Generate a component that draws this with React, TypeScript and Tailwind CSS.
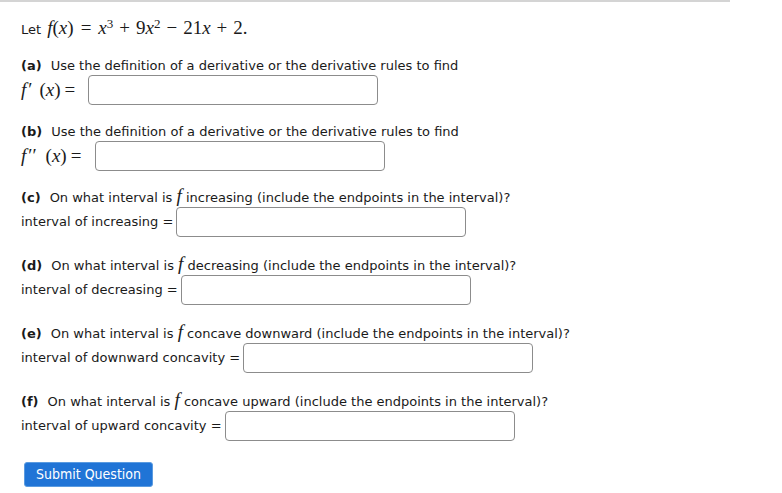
import type { ReactNode } from 'react';

const mathFont = { fontFamily: '"Liberation Serif", "DejaVu Serif", serif' };

function V({ children }: { children: ReactNode }) {
  return <i className="italic">{children}</i>;
}

// spacing like MathJax: relations a bit wider than binary operators
function Rel({ children }: { children: ReactNode }) {
  return <span className="mx-[7px]">{children}</span>;
}
function Bin({ children }: { children: ReactNode }) {
  return <span className="mx-[6px]">{children}</span>;
}

function AnswerBox() {
  return <input type="text" className="h-[30px] w-[290px] rounded-[4px] border border-[#8c8c8c] bg-white px-2 outline-none" />;
}

function PartHead({ tag, children }: { tag: string; children: ReactNode }) {
  return (
    <div className="h-[16px] leading-[16px] whitespace-nowrap">
      <span className="font-bold">({tag})</span>
      <span className="ml-[9px]">{children}</span>
    </div>
  );
}

function F() {
  return (
    <span className="text-[19px] leading-[16px] italic" style={mathFont}>
      f
    </span>
  );
}

function IntervalPart({ tag, what, label }: { tag: string; what: string; label: string }) {
  return (
    <div>
      <PartHead tag={tag}>
        On what interval is <F /> {what} (include the endpoints in the interval)?
      </PartHead>
      <div className="mt-[3px] flex h-[30px] items-center gap-[3px]">
        <span>{label} =</span>
        <AnswerBox />
      </div>
    </div>
  );
}

export default function App() {
  return (
    <div className="h-[493px] w-[782px] overflow-hidden bg-white text-[13px] text-[#1a1a1a]" style={{ fontFamily: '"DejaVu Sans", sans-serif' }}>
      <div className="h-[2px] w-[730px] bg-[#d4d4d4]" />
      <div className="px-[21px] pt-[16px]">
        <div className="flex h-[20px] items-baseline">
          <span>Let&nbsp;</span>
          <span className="ml-[2px] text-[19px] leading-[20px]" style={mathFont}>
            <V>f</V>(<V>x</V>)<Rel>=</Rel><V>x</V>
            <sup className="text-[13px]">3</sup>
            <Bin>+</Bin>9<V>x</V>
            <sup className="text-[13px]">2</sup>
            <Bin>−</Bin>21<V>x</V>
            <Bin>+</Bin>2.
          </span>
        </div>

        <div className="mt-[20px]">
          <PartHead tag="a">Use the definition of a derivative or the derivative rules to find</PartHead>
          <div className="mt-[1px] flex h-[30px] items-center gap-[13px]">
            <span className="text-[19px]" style={mathFont}>
              <V>f</V>
              <span className="ml-[2px] mr-[7px]">′</span>(<V>x</V>)<span className="ml-[4px]">=</span>
            </span>
            <AnswerBox />
          </div>
        </div>

        <div className="mt-[19px]">
          <PartHead tag="b">Use the definition of a derivative or the derivative rules to find</PartHead>
          <div className="mt-[1px] flex h-[30px] items-center gap-[14px]">
            <span className="text-[19px]" style={mathFont}>
              <V>f</V>
              <span className="ml-[2px] mr-[9px]">′′</span>(<V>x</V>)<span className="ml-[4px]">=</span>
            </span>
            <AnswerBox />
          </div>
        </div>

        <div className="mt-[17px] flex flex-col gap-[19px]">
          <IntervalPart tag="c" what="increasing" label="interval of increasing" />
          <IntervalPart tag="d" what="decreasing" label="interval of decreasing" />
          <IntervalPart tag="e" what="concave downward" label="interval of downward concavity" />
          <IntervalPart tag="f" what="concave upward" label="interval of upward concavity" />
        </div>

        <button
          className="mt-[21px] ml-[3px] h-[25px] rounded-[3px] border border-[#5b9be0] bg-[#2074d6] px-[11px] text-[14px] leading-[23px] text-white"
          style={{ fontFamily: '"DejaVu Sans Condensed", "DejaVu Sans", sans-serif' }}
        >
          Submit Question
        </button>
      </div>
    </div>
  );
}
